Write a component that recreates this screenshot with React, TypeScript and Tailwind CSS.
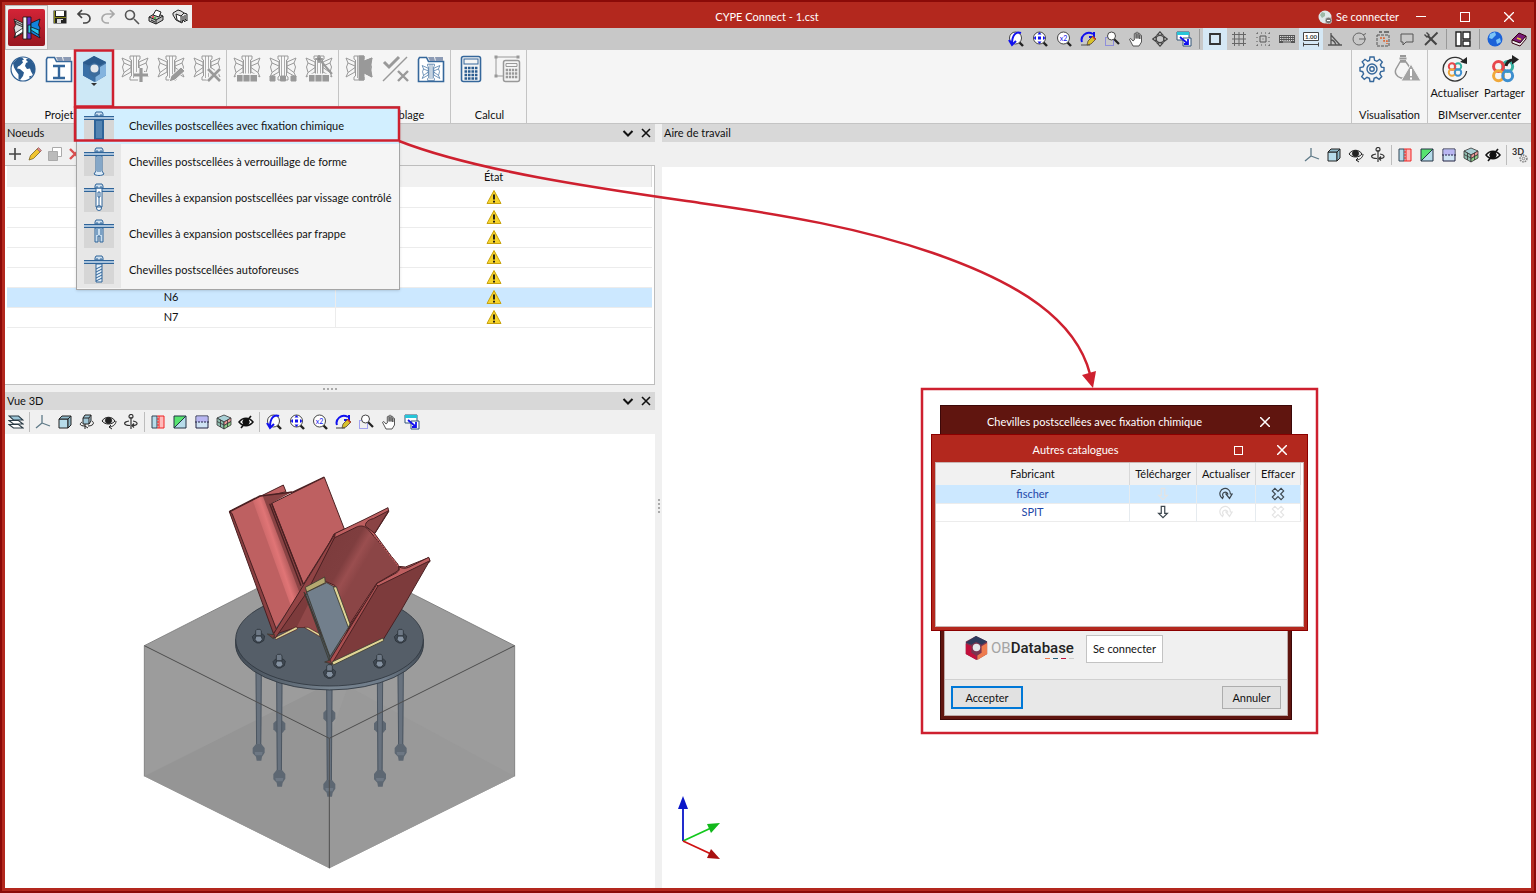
import { useState } from "react";
import type { ReactNode } from "react";

const node = (
  <g>
    <path d="M1 3l9 4v10l-9 5 2-4.500-1.500-5.500L3 8zM27 3l-9 4v10l9 5-2-4.500 1.500-5.500L25 8z" />
    <path d="M3 8l7 3M25 8l-7 3M3 17.500l7-5M25 17.500l-7-5" />
    <path d="M9 1h10v3l-1.500 1v16l1.500 1v3H9v-3l1.500-1V5L9 4z" fill="#f8f8f8" />
    <path d="M12.500 1v22M15.500 1v22" strokeWidth="0.800" />
  </g>
);

const blocks = (
  <g fill="#999" stroke="none">
    <path d="M3 18.500h22V27H3z" fill="#f5f5f5" />
    <path d="M4 20h5.600v6.500H4zM10.400 20h6.200v6.500h-6.200zM17.400 20H24v6.500h-6.600z" />
  </g>
);

const knot = (
  <g fill="none" strokeWidth="2.600">
    <circle cx="10" cy="10" r="4.300" stroke="#e8474c" />
    <circle cx="18" cy="10" r="4.300" stroke="#35b0a0" />
    <circle cx="10" cy="18" r="4.300" stroke="#f0a83a" />
    <circle cx="18" cy="18" r="4.300" stroke="#3e8fcf" />
    <path d="M12.500 6.500a4.300 4.300 0 0 1 1.800 4l-1 3" stroke="#e8474c" />
  </g>
);

const hexCube = (top: string, left: string, right: string, core: string) => (
  <g>
    <path d="M14 1l12 6v13.500L15 27 3 20.500V7z" fill={core} />
    <path d="M14 1l12 6-6 3.500L14 7.500l-5 3-6-2.500z" fill={top} />
    <path d="M3 9.500l6 2.500v7l5.500 3.500V27L3 20.500z" fill={left} />
    <path d="M26 8.500v12L15.500 27v-5l4.500-3v-7z" fill={right} />
    <circle cx="14.500" cy="13.500" r="4" fill="#e3e7ec" />
  </g>
);

// ribbon icons, drawn on a 28 x 28 grid
const bigIcons: Record<string, ReactNode> = {
  globe: (
    <g>
      <circle cx="14" cy="14" r="12" fill="#fff" stroke="#2f5f92" strokeWidth="1.200" />
      <path d="M4 8l5-5 4-.5 2 2-2 1 1 2-3 3-2 1-1 2 3 .5 4 3.500-1 3.500-3 4-1.500-1v-4.500L7 16l-2-3.500z" fill="#2b5c90" />
      <path d="M18 3.500l4 1.500 4 6v5l-2 4-2-3.500-1-3-3 .5-2-3 1-3 2-1-2-2z" fill="#2b5c90" />
      <path d="M20 21.500l3-1-2 3z" fill="#2b5c90" />
    </g>
  ),
  project: (
    <g fill="none" stroke="#35679b">
      <path d="M1.500 26.500V4.500l1-2h7l2 4h15v20z" fill="#fff" strokeWidth="1.600" />
      <path d="M11 2h6l1 4h-5zM18 2h8v4h-7z" fill="#8c9bb5" stroke="none" />
      <path d="M8 11h12M14 11v12M8 23h12" strokeWidth="2.400" />
    </g>
  ),
  cube: hexCube("#2a5a8c", "#3a70a6", "#83b3de", "#3c6c9d"),
  add: (
    <g fill="none" stroke="#999">
      {node}
      <path d="M20 13v14M13 20h14" stroke="#f5f5f5" strokeWidth="6" />
      <path d="M20 13v14M13 20h14" strokeWidth="3.200" />
    </g>
  ),
  edit: (
    <g fill="none" stroke="#999">
      {node}
      <path d="M12 27l2-6 10-9 4 4-10 9z" fill="#999" stroke="#f5f5f5" />
    </g>
  ),
  remove: (
    <g fill="none" stroke="#999">
      {node}
      <path d="M15 14l12 12M27 14L15 26" stroke="#f5f5f5" strokeWidth="5" />
      <path d="M15 14l12 12M27 14L15 26" strokeWidth="2.600" />
    </g>
  ),
  plates: (
    <g fill="none" stroke="#999">
      {node}
      {blocks}
    </g>
  ),
  supports: (
    <g fill="none" stroke="#999">
      {node}
      <path d="M1 21h5v5H1zM11.500 21h5v5h-5zM22 21h5v5h-5z" fill="#999" />
    </g>
  ),
  wizard: (
    <g fill="none" stroke="#999">
      {node}
      {blocks}
      <path d="M15 5l12 14" strokeWidth="2" />
      <path d="M14 0l1 3 3 1-3 1-1 3-1-3-3-1 3-1z" fill="#888" />
    </g>
  ),
  shade: (
    <g fill="none" stroke="#999">
      {node}
      <path d="M14 1h5v5l8-3-1.500 9.500L27 22l-8-4v7h-5z" fill="#999" />
    </g>
  ),
  check: (
    <g fill="none" stroke="#999">
      <path d="M3 7l5 5L18 2" strokeWidth="3" />
      <path d="M2 26L26 2" strokeWidth="1.400" />
      <path d="M17 16l10 10M27 16L17 26" strokeWidth="2.400" />
    </g>
  ),
  folder: (
    <g fill="none" stroke="#35679b">
      <path d="M1.500 26.500V4.500l1-2h7l2 4h15v20z" fill="#fff" strokeWidth="1.600" />
      <path d="M11 2h6l1 4h-5zM18 2h8v4h-7z" fill="#8c9bb5" stroke="none" />
      <g transform="translate(4.500 8.500) scale(0.680)">{node}</g>
    </g>
  ),
  calc: (
    <g fill="none" stroke="#35679b">
      <rect x="4.500" y="1.500" width="19" height="25" rx="2" strokeWidth="1.600" />
      <rect x="7" y="4" width="14" height="5" />
      <path d="M7.500 13h13M7.500 16.500h13M7.500 20h13M7.500 23.500h13" strokeWidth="2.600" strokeDasharray="2.600 0.860" stroke="#2b5c90" />
    </g>
  ),
  calcFrame: (
    <g fill="none" stroke="#999">
      <path d="M3 2v19M3 2h22M3 21h7" />
      <path d="M1.500 0.500h3v3h-3zM1.500 19.500h3v3h-3zM23.500 0.500h3v3h-3z" fill="#999" stroke="none" />
      <rect x="10.500" y="5.500" width="16" height="21" rx="2" fill="#f5f5f5" strokeWidth="1.500" />
      <path d="M13 8.500h11v3H13z" />
      <path d="M12.700 15h11.600M12.700 18.500h11.600M12.700 22h11.600" strokeWidth="2.400" strokeDasharray="2.300 0.800" />
    </g>
  ),
  gear: (
    <g fill="none" stroke="#35679b" strokeWidth="1.400">
      <path d="M12 2h4l.6 3.300 2.300 1 2.800-2 2.600 2.700-1.900 2.800 1 2.300L26 12.500v3.500l-3.200.6-1 2.400 1.900 2.700-2.600 2.600-2.800-1.900-2.200.9-.6 3.200h-3.500l-.6-3.200-2.400-1-2.700 2-2.600-2.600 1.900-2.800-.9-2.200L2 16v-3.500l3.200-.6 1-2.300-2-2.800L7 4.300l2.700 1.900 1.800-.8z" />
      <circle cx="14" cy="14" r="5" />
      <circle cx="14" cy="14" r="2.200" />
    </g>
  ),
  bulb: (
    <g fill="none" stroke="#999">
      <path d="M6 1h6M5.500 3.500h7M6 6h6" strokeWidth="2" />
      <path d="M6 7l-4 7c-2 4 1 8 5 9h4l6-9-5-7z" strokeWidth="1.500" />
      <path d="M17 9l10 17H7z" fill="#a3a3a3" stroke="#f5f5f5" />
      <path d="M17 14v7M17 22.500v2" stroke="#fff" strokeWidth="2" />
    </g>
  ),
  refresh: (
    <g fill="none">
      <g transform="translate(3.500 4) scale(0.750)">{knot}</g>
      <path d="M24 8a11.800 11.800 0 1 0 1.600 8" stroke="#333" strokeWidth="1.300" />
      <path d="M19 7l7 2V2z" fill="#222" />
    </g>
  ),
  share: (
    <g fill="none">
      <g transform="translate(-4 0) scale(1.150)">{knot}</g>
      <path d="M15 11c1-4 3-6 7-6" stroke="#222" strokeWidth="3" />
      <path d="M21 0l7 4.500-7 5z" fill="#222" />
    </g>
  ),
};

const lens = (
  <g>
    <path d="M11 11l4 4" stroke="#222" strokeWidth="2.400" />
    <circle cx="7.500" cy="7" r="6" fill="#fff" stroke="#444" />
  </g>
);

// toolbar icons, drawn on a 16 x 16 grid
const smallIcons: Record<string, ReactNode> = {
  save: (
    <g>
      <path d="M1.500 1.500h13v13h-13z" fill="#222" />
      <path d="M4 2h8v5H4z" fill="#fff" />
      <path d="M2 8h12v1H2z" fill="#8a8a1a" />
      <path d="M2 2h1v12H2z" fill="#8a8a1a" />
      <path d="M5 10h6v4H5z" fill="#ddd" />
      <path d="M9 11h2v3H9z" fill="#222" />
    </g>
  ),
  undo: <path d="M6 1L2 5l4 4M2 5h7a5 4.500 0 0 1 0 9H7" stroke="#444" strokeWidth="1.700" />,
  redo: <path d="M10 1l4 4-4 4M14 5H7a5 4.500 0 0 0 0 9h2" stroke="#a8a8a8" strokeWidth="1.700" />,
  search: <path d="M10 10l5 5M6 1.500a4.500 4.500 0 1 1 0 9 4.500 4.500 0 0 1 0-9z" stroke="#555" strokeWidth="1.600" />,
  print: (
    <g stroke="#222">
      <path d="M1 8l7-4 7 3v4l-7 4-7-3z" fill="#bbb" />
      <path d="M5 6l3-5 5 2-2 5z" fill="#fff" />
      <path d="M1 8l7 3 7-4M8 11v4M3 11l4 2" />
      <path d="M4 8h2" stroke="#e33" strokeWidth="1.500" />
      <path d="M6 9h2" stroke="#3b3" strokeWidth="1.500" />
    </g>
  ),
  plot: (
    <g stroke="#222">
      <path d="M1 4l5-3 3 1 3 2 3 1v7l-2-2v3l-2-2-1 3-6-3-3-5z" fill="#ddd" />
      <path d="M4 5l5 2v6l-4-2z" fill="#fff" />
      <path d="M9 7l3-3M11 7v5M13 6v4" />
    </g>
  ),
  zoomPrev: (
    <g>
      {lens}
      <path d="M13 2C8 0 4 4 4 13M1 9l3 5 4-4" stroke="#11e" strokeWidth="2" />
    </g>
  ),
  zoomAll: (
    <g>
      {lens}
      <path d="M7.500 1l2 2.500h-4zM7.500 13l2-2.500h-4zM1.500 7L4 5v4zM13.500 7L11 5v4zM6 5.500h3v3H6z" fill="#11e" />
    </g>
  ),
  zoomTwo: (
    <g>
      {lens}
      <text x="7.500" y="9.500" textAnchor="middle" fontSize="7" fill="#11e">
        x2
      </text>
    </g>
  ),
  redraw: (
    <g>
      <path d="M13 3C6-1 0 6 2 11M14 1v5H9" stroke="#11e" strokeWidth="2" />
      <path d="M1 14h9" stroke="#777" strokeWidth="1.500" />
      <path d="M7 14l1-4 5-5 3 3-5 5z" fill="#d9c22a" stroke="#543" strokeWidth="0.800" />
      <path d="M13 5l3 3-1 1-3-3z" fill="#c33" />
    </g>
  ),
  zoomWindow: (
    <g>
      <path d="M1.500 6.500h8v8h-8z" stroke="#55e" strokeDasharray="1 1" />
      <path d="M10 8l5 5" stroke="#222" strokeWidth="2.200" />
      <circle cx="7.500" cy="5" r="4" fill="#fff" stroke="#444" />
    </g>
  ),
  hand: (
    <path
      d="M5 10L2.800 7.500l-1.300.8L5 15h6l2.500-4V4.500c-.3-.8-1.500-.8-1.700 0V8 2.800c-.3-.8-1.500-.8-1.800 0V7.500 1.800c-.3-.9-1.600-.9-1.900 0V7.500 2.800c-.3-.8-1.500-.8-1.800 0V9z"
      fill="#fff"
      stroke="#444"
      strokeWidth="0.900"
    />
  ),
  orbit: (
    <g stroke="#444" strokeWidth="1.200">
      <path d="M8 4.500a4 3.500 0 1 1 0 7 4 3.500 0 0 1 0-7z" />
      <path d="M8 .8L10.800 4H5.200zM8 15.200L5.200 12h5.600zM.8 8L4 5.500v5zM15.200 8L12 5.500v5z" fill="#ddd" />
    </g>
  ),
  fullView: (
    <g>
      <path d="M1 1h12v8H1z" fill="#fff" stroke="#357" />
      <path d="M1 1h12v3H1z" fill="#27c5d8" />
      <path d="M7 7h8v8H7z" fill="#fff" stroke="#357" />
      <path d="M4 6l7 6M12 8v5H8" stroke="#11e" strokeWidth="1.800" />
    </g>
  ),
  square: <path d="M3 3h10v10H3z" stroke="#333" strokeWidth="1.800" />,
  grid: <path d="M3.500 1v14M8 1v14M12.500 1v14M1 3.500h14M1 8h14M1 12.500h14" stroke="#666" />,
  snap: (
    <g stroke="#555">
      <path d="M5 5h6v6H5z" />
      <path d="M7.500 8h1" />
      <path d="M2 2h13M2 14h13M2 2v13M14 2v13" strokeDasharray="1 3" />
    </g>
  ),
  keyboard: (
    <g>
      <path d="M0 4h16v8H0z" fill="#555" />
      <path d="M1 5.500h14M1 7.500h14M1 9.500h14" stroke="#ddd" strokeDasharray="1.300 0.900" />
      <path d="M4 11h8" stroke="#ddd" strokeWidth="0.800" />
    </g>
  ),
  dims: (
    <g>
      <path d="M.5 1.500h15v8H.5z" fill="#fff" stroke="#444" />
      <path d="M.5 13.500h15M.5 11.500v4M15.500 11.500v4" stroke="#444" />
      <text x="8" y="8" textAnchor="middle" fontSize="6" fontWeight="bold" fill="#333">
        1.00
      </text>
    </g>
  ),
  angle: <path d="M4 2v12h11M4 4l9 10M4 9c3 0 4 2 5 5M1 14h3" stroke="#555" strokeWidth="1.300" />,
  circle: <path d="M8 2a6 6 0 1 1 0 12A6 6 0 0 1 8 2zM8 8h7M12 4l3-1.500" stroke="#666" />,
  select: (
    <g>
      <path d="M2 4h12v11H2z" stroke="#555" strokeDasharray="3 1" />
      <path d="M4 1h3M9 1h5" stroke="#555" strokeWidth="1.500" />
      <path d="M5 7h4v3h3v3" stroke="#d63" strokeWidth="1.500" strokeDasharray="2 1" />
    </g>
  ),
  note: <path d="M2 3h12v8H7l-3 3v-3H2z" stroke="#555" />,
  tools: (
    <g stroke="#444">
      <path d="M5 5l8.500 8.500" strokeWidth="2.200" />
      <path d="M1.500 3.500L4 6l2-2-2.500-2.500" strokeWidth="1.400" />
      <path d="M14.500 1.500L2 14" strokeWidth="1.800" />
    </g>
  ),
  layout: <path d="M1 1h5v14H1zM8 1h7v7H8zM8 10h7v5H8z" fill="#fff" stroke="#222" strokeWidth="1.400" />,
  earth: (
    <g>
      <circle cx="8" cy="8" r="7.500" fill="#1b62d8" />
      <path d="M3 3l5-2 1 3-4 4-3-1zM9 9l4-2 1 4-4 2z" fill="#7cc4f8" />
    </g>
  ),
  book: (
    <g>
      <path d="M1 9l7-7 7 3-6 8z" fill="#7a1a78" stroke="#301" />
      <path d="M1 9v3l8 3 6-7V5l-6 7z" fill="#eee" stroke="#301" />
      <path d="M6 7l4 1.500" stroke="#e6c23a" strokeWidth="1.600" />
    </g>
  ),
  plus: <path d="M8 2v12M2 8h12" stroke="#444" strokeWidth="1.600" />,
  pencil: (
    <g>
      <path d="M2 14l1.500-4.500 7-7 3 3-7 7z" fill="#f0c430" stroke="#776325" strokeWidth="0.800" />
      <path d="M10 3l3 3 1.500-1.500-3-3z" fill="#d88" stroke="#855" strokeWidth="0.600" />
    </g>
  ),
  copy: (
    <g stroke="#aaa">
      <path d="M5.500 1.500h9v9h-9z" fill="#fff" />
      <path d="M1.500 5.500h9v9h-9z" fill="#bbb" />
    </g>
  ),
  cross: <path d="M3 3l10 10M13 3L3 13" stroke="#d94f4f" strokeWidth="2.400" />,
  layers: (
    <g stroke="#2b3b45" strokeWidth="1.100">
      <path d="M1 10.500h9.500L15 14H5.500z" fill="#fff" />
      <path d="M1 6.500h9.500L15 10H5.500z" fill="#fff" />
      <path d="M1 2h9.500L15 6H5.500z" fill="#9cc6d8" />
    </g>
  ),
  axes: <path d="M7 1v8M7 9l8 3M7 9l-6 5" stroke="#5f7a88" strokeWidth="1.300" />,
  box: (
    <g stroke="#222">
      <path d="M2 5h9v9H2z" fill="#b7dcea" />
      <path d="M2 5l3-3h9l-3 3zM11 5l3-3v9l-3 3z" fill="#8fb9c9" />
    </g>
  ),
  boxOrbit: (
    <g stroke="#222">
      <path d="M4 4h6v6H4zM4 4l2-3h6l-2 3M12 1v6l-2 3" fill="#9fc6d6" />
      <path d="M3 8c-3 2-2 4 3 4M13 7c3 2 1 5-4 5M6 10v5M6 12l3 2" />
    </g>
  ),
  eyeOrbit: (
    <g stroke="#222">
      <path d="M1 7c3-5 10-5 13 0-3 4-10 4-13 0z" fill="#ddd" />
      <circle cx="7.500" cy="6.500" r="3" fill="#222" />
      <path d="M15 7c0 4-4 6-7 6M10 11l-2 2 3 2" />
    </g>
  ),
  axisOrbit: (
    <g stroke="#333" strokeWidth="1.200">
      <path d="M8 3v12M6 2.500a2 2 0 1 1 4 0 2 2 0 0 1-4 0z" />
      <path d="M6 7C-.5 8 .5 11.500 7 11.500M10 7c6 1 5 4.500-.500 4.500M11 9.500l-2 2 2 2" />
    </g>
  ),
  splitView: (
    <g>
      <path d="M2 2h5v12H2z" fill="#b7dcea" stroke="#345" />
      <path d="M9 2h5v12H9z" fill="#fbb" stroke="#e22" />
      <path d="M8 1v14" stroke="#e22" strokeDasharray="2 1" />
    </g>
  ),
  diagonal: (
    <g>
      <path d="M2 2h12L2 14z" fill="#57e36f" />
      <path d="M14 2v12H2z" fill="#b7dcea" />
      <path d="M2 2h12v12H2zM2 14L14 2" stroke="#234" />
    </g>
  ),
  section: (
    <g>
      <path d="M2 2h12v12H2z" fill="#cfe3f4" stroke="#224" />
      <path d="M2.500 2.500h11V8h-11z" fill="#b9b6f2" />
      <path d="M1 8h14" stroke="#224" strokeDasharray="2 1" />
    </g>
  ),
  stack: (
    <g stroke="#333" strokeWidth="0.800">
      <path d="M8 1l7 3-7 4-7-4z" fill="#a9d0d6" />
      <path d="M1 4l7 4v7l-7-4z" fill="#8fbdb0" />
      <path d="M15 4L8 8v3.500l7-4z" fill="#e99" />
      <path d="M15 7.500l-7 4V15l7-4z" fill="#8fd08a" />
      <path d="M1 7.500L8 11M4.500 6v7M11.500 6v7" />
    </g>
  ),
  hidden: (
    <g stroke="#111">
      <path d="M1 8c4-5 10-5 14 0-4 5-10 5-14 0z" fill="#fff" strokeWidth="1.500" />
      <circle cx="8" cy="8" r="3.200" fill="#111" />
      <path d="M3 14L13 2" strokeWidth="1.600" />
    </g>
  ),
  threeD: (
    <g>
      <text x="0" y="8" fontSize="9" fontWeight="bold" fill="#333">
        3D
      </text>
      <circle cx="11.500" cy="11.500" r="3.400" stroke="#888" strokeWidth="1.600" strokeDasharray="1.600 0.900" />
      <circle cx="11.500" cy="11.500" r="1.300" stroke="#888" />
    </g>
  ),
  download: <path d="M6 1.500h4v8h3L8 14.500 3 9.500h3z" stroke="currentColor" strokeWidth="1.400" />,
  update: <path d="M2 11a6 6 0 1 1 11-3h2l-3 5-4-5h2a3 3 0 1 0-5 3l-1 2z" stroke="currentColor" strokeWidth="1.400" />,
  erase: <path d="M4.500 1.500L8 5l3.500-3.500 3 3L11 8l3.500 3.500-3 3L8 11l-3.500 3.500-3-3L5 8 1.500 4.500z" stroke="currentColor" strokeWidth="1.300" />,
};

const SmallIcon = ({ name, className = "size-4" }: { name: string; className?: string }) => (
  <svg viewBox="0 0 16 16" fill="none" className={className} aria-hidden="true">
    {smallIcons[name]}
  </svg>
);

const ToolButton = ({ name, width = "w-[22px]", active = false }: { name: string; width?: string; active?: boolean }) => (
  <button
    aria-label={name}
    className={`flex h-[22px] shrink-0 items-center justify-center hover:bg-sky-100 ${width} ${active ? "bg-[#d5e8f5]" : ""}`}
  >
    <SmallIcon name={name} />
  </button>
);

const Separator = () => <span className="mx-[2px] h-5 w-px shrink-0 bg-[#bdbdbd]" />;

const RibbonButton = ({ name }: { name: string }) => (
  <button aria-label={name} className="flex h-[38px] w-9 shrink-0 items-center justify-center hover:bg-sky-100">
    <svg viewBox="0 0 28 28" fill="none" className="size-7">
      {bigIcons[name]}
    </svg>
  </button>
);

const RibbonGroup = ({ icons, label }: { icons: string[]; label?: string }) => (
  <div className="mr-[2px] flex flex-col justify-between border-r border-[#c4c4c4]">
    <div className="flex pr-px">
      {icons.map((icon) => (
        <RibbonButton key={icon} name={icon} />
      ))}
    </div>
    <span className="text-center">{label}</span>
  </div>
);

const anchors = [
  {
    label: "Chevilles postscellées avec fixation chimique",
    shape: <path d="M11 9h8v19h-8z" fill="#5484b2" strokeWidth="2" />,
  },
  {
    label: "Chevilles postscellées à verrouillage de forme",
    shape: <path d="M12 9h6v15l2 3c-2 2-8 2-10 0l2-3zM14 10v15M16 10v15" fill="#dceaf6" />,
  },
  {
    label: "Chevilles à expansion postscellées par vissage contrôlé",
    shape: <path d="M12 5h6v19h-6zM14 9h2v5h-2zM15 14v8M12.500 25a2.500 2.500 0 1 0 5 0 2.500 2.500 0 0 0-5 0z" fill="#fff" />,
  },
  {
    label: "Chevilles à expansion postscellées par frappe",
    shape: <path d="M11 9h8v14h-3v-6h-2v6h-3zM13 10v6M17 10v6" fill="#c9ddee" />,
  },
  {
    label: "Chevilles postscellées autoforeuses",
    shape: <path d="M12 9h6v18h-6zM12 14l6-3M12 17l6-3M12 20l6-3M12 23l6-3M12 26l6-3" fill="#e6f0f8" />,
  },
];

const AnchorMenu = () => (
  <ul
    role="menu"
    className="absolute top-full left-0 z-20 w-max min-w-[323px] border border-[#a5a5a5] bg-[#f5f5f5] py-px shadow-sm"
  >
    {anchors.map((anchor, i) => (
      <li key={anchor.label} role="none">
        <button
          role="menuitem"
          className={`flex h-9 w-full items-center text-left hover:bg-[#d2efff] ${i === 0 ? "bg-[#d2efff]" : ""}`}
        >
          <span className={`flex h-full w-11 items-center justify-center ${i === 0 ? "" : "bg-[#e7e7e7]"}`}>
            <svg viewBox="0 0 30 30" fill="none" stroke="#2f6499" className="size-[30px]">
              <path d="M0 6h30v23H0z" fill="#d6d6d6" stroke="none" />
              <path d="M0 6h30v3H0z" fill="#a9c3dc" stroke="none" />
              <path d="M0 5.500h30M0 8.500h30" />
              {anchor.shape}
              <path d="M12 1h6l1 2v2h-8V3zM13 3v2M17 3v2" fill="#cfe0ef" />
            </svg>
          </span>
          <span className="pr-[7px] pl-2">{anchor.label}</span>
        </button>
      </li>
    ))}
  </ul>
);

const PanelTitle = ({ title, controls = false }: { title: string; controls?: boolean }) => (
  <div className="flex h-[18px] shrink-0 items-center justify-between bg-[#d8d8d8] pr-[2px] pl-[2px]">
    <h2>{title}</h2>
    {controls && (
      <span className="flex gap-1">
        <button aria-label="Réduire" className="flex size-[14px] items-center justify-center">
          <svg viewBox="0 0 12 12" fill="none" stroke="#111" strokeWidth="2" className="size-3">
            <path d="M1.500 4L6 8.500 10.500 4" />
          </svg>
        </button>
        <button aria-label="Fermer" className="flex size-[14px] items-center justify-center">
          <svg viewBox="0 0 12 12" fill="none" stroke="#111" strokeWidth="1.600" className="size-3">
            <path d="M2 2l8 8M10 2l-8 8" />
          </svg>
        </button>
      </span>
    )}
  </div>
);

const Warning = () => (
  <svg viewBox="0 0 16 16" className="mx-auto size-4" role="img" aria-label="Avertissement">
    <path d="M8 1.500L15 14.500H1z" fill="#f6d42c" stroke="#c9a20c" strokeLinejoin="round" />
    <path d="M8 5.500v5M8 11.800v1.600" stroke="#111" strokeWidth="1.800" />
  </svg>
);

const nodes = [
  { id: 1 },
  { id: 2 },
  { id: 3 },
  { id: 4 },
  { id: 5 },
  { id: 6, name: "N6" },
  { id: 7, name: "N7" },
];

const NodesTable = () => {
  const [selected, setSelected] = useState(6);

  return (
    <div className="h-[220px] shrink-0 border-t border-r border-b border-[#bdbdbd] bg-white px-[2px]">
      <table className="w-full table-fixed border-collapse text-center">
        <thead>
          <tr className="h-[21px] bg-[#f1f1f1]">
            <th className="w-[51%] border-r border-[#dcdcdc] p-0" />
            <th className="border-r border-[#dcdcdc] p-0 font-normal">État</th>
          </tr>
        </thead>
        <tbody>
          {nodes.map(({ id, name }) => (
            <tr
              key={id}
              onClick={() => setSelected(id)}
              className={`h-5 border-b border-[#ececec] ${selected === id ? "bg-[#cce8ff]" : ""}`}
            >
              <td className="border-r border-[#ececec] p-0">{name}</td>
              <td className="p-0">
                <Warning />
              </td>
            </tr>
          ))}
        </tbody>
      </table>
    </div>
  );
};

const Bolt = ({ x, y }: { x: number; y: number }) => (
  <g transform={`translate(${x} ${y})`} stroke="#2b323a" strokeWidth="2.500">
    <path d="M-18 2l8-8h22l7 6-3 14-12 7H-4l-10-6z" fill="#3f4852" />
    <path d="M-7 0h15l4 10-6 8H-4l-6-8z" fill="#8491a0" />
    <path d="M-8-16l4-4h9l4 4v15H-8z" fill="#6d7885" />
  </g>
);

const Rod = ({ x, top, bottom, nut }: { x: number; top: number; bottom: number; nut?: number }) => (
  <g>
    {nut && <path d={`M${x - 18} ${nut - 10}l8-8h20l8 8v18l-8 10h-18l-10-10z`} fill="#5d6772" />}
    <path d={`M${x - 9} ${top}h18l-2 ${bottom - top}h-14z`} fill="#68727e" />
    <path d={`M${x - 8} ${top}l2 ${bottom - top}M${x + 8} ${top}l-2 ${bottom - top}`} stroke="#4c5661" strokeWidth="3" />
    <path d={`M${x - 18} ${bottom - 20}l10-12h16l10 12v14l-8 12-2 12h-14l-2-12-10-10z`} fill="#5d6772" />
    <path d={`M${x - 12} ${bottom - 8}h24l-2 10h-20z`} fill="#6d7783" />
  </g>
);

const Model = () => (
  <svg viewBox="0 0 1200 1260" className="h-[420px] w-[400px]" role="img" aria-label="Vue 3D de l'ancrage">
    <defs>
      <linearGradient id="fold" gradientUnits="userSpaceOnUse" x1="395" y1="260" x2="470" y2="235">
        <stop offset="0" stopColor="#be6061" />
        <stop offset="0.500" stopColor="#e07576" />
        <stop offset="1" stopColor="#8f4546" />
      </linearGradient>
      <linearGradient id="groove" gradientUnits="userSpaceOnUse" x1="600" y1="250" x2="720" y2="320">
        <stop offset="0" stopColor="#7d3c3d" />
        <stop offset="0.450" stopColor="#7f3e3f" />
        <stop offset="0.650" stopColor="#9a4e4f" />
        <stop offset="0.850" stopColor="#8b4546" />
      </linearGradient>
      <linearGradient id="rim" x1="0" x2="1">
        <stop offset="0" stopColor="#434c56" />
        <stop offset="0.500" stopColor="#76838f" />
        <stop offset="0.800" stopColor="#6f7c8a" />
        <stop offset="1" stopColor="#434c56" />
      </linearGradient>
    </defs>

    <path d="M43 557L598 275l556 282v392L598 1225 43 949z" fill="#9c9c9c" />
    <path d="M43 949L598 670v555z" fill="#959595" />
    <path d="M598 835v390l556-276-500-270z" fill="#999" />
    <path d="M43 949V557L598 275l556 282v392" fill="none" stroke="#777" strokeWidth="2.500" />

    <Rod x={386} top={630} bottom={884} />
    <Rod x={812} top={630} bottom={884} />
    <Rod x={448} top={650} bottom={962} nut={800} />
    <Rod x={750} top={650} bottom={962} nut={800} />
    <Rod x={598} top={670} bottom={992} nut={768} />
    <path d="M43 557l555 278 556-278M598 835v390" fill="none" stroke="#4d4d4d" strokeWidth="3" />

    <path d="M317 538v22a282 138 0 0 0 563 0v-22z" fill="url(#rim)" stroke="#2f363e" strokeWidth="2.500" />
    <ellipse cx="598.500" cy="538" rx="281.500" ry="140" fill="#555e68" stroke="#2f363e" strokeWidth="2.500" />
    <Bolt x={385} y={528} />
    <Bolt x={811} y={528} />
    <Bolt x={447} y={603} />
    <Bolt x={748} y={603} />

    <g stroke="#4a2022" strokeWidth="3" strokeLinejoin="round">
      <path d="M298 155L460 75l8 20-78 20z" fill="#be6061" />
      <path d="M390 108l100-14-65 36 95 240-10 50-30 20z" fill="#8a4344" stroke="none" />
      <path d="M298 155l74-36 118 310-55 78z" fill="#be6061" stroke="none" />
      <path d="M368 121l30-14 114 300-28 35z" fill="url(#fold)" stroke="none" />
      <path d="M298 155l92-47 100-12 93-44" fill="none" strokeWidth="5" />
      <path d="M425 130L583 52l60 155-28 14-95 152z" fill="#be6061" />
      <path d="M425 130l95 243M419 131l94 246" fill="none" strokeWidth="4" />
      <path d="M298 155l132 365 10-10L306 160z" fill="#8a4042" />
      <path d="M432 524l90-130 52 132-50-24h-24z" fill="#7d3b3c" />
      <path d="M500 502l35-70 20 52 16 42-47-24z" fill="#914849" stroke="none" />
      <path d="M433 534l66-34 4 7-64 31zM522 502h12l36 20v8z" fill="#e0d596" strokeWidth="2" />

      <path d="M612 222l90-43 72-36 2 12-42 66 72 98 20 2 70-28 4 12-158 78-82 200-132-198z" fill="#be5f60" />
      <path d="M776 152l-42 68-28-22c0-14 14-20 24-22z" fill="#8a4344" />
      <path d="M612 234l70-34c12-4 24-2 32 8l86 100c10 12 8 22-2 28l-58 34-82 124-44-118-28-12-60 28z" fill="url(#groove)" />
      <path d="M733 226l72 92" fill="none" stroke="#be5f60" strokeWidth="4" strokeDasharray="5 3" />
      <path d="M615 222L428 526l8 8 94-136 84-166z" fill="#924445" />
      <path d="M742 376l158-76-85 148-55 90-155 74 55-116z" fill="#7d3b3c" />
      <path d="M742 370L596 606l8 8 140-236z" fill="#a94f50" />
      <path d="M738 372l62-34c8-6 10-10 6-18 10 6 20 6 30 2l60-30 4 10-156 76z" fill="#be5f60" />
    </g>

    <g stroke="#3a3a30" strokeWidth="2.500" strokeLinejoin="round">
      <path d="M530 396l60-28 25 14 43 116-58 92z" fill="#727f8c" />
      <path d="M522 396l76 192v16z" fill="#4a5560" />
      <path d="M526 382l58-31 2 17-56 28z" fill="#b5a970" />
      <path d="M610 382l9-2 41 112-5 10z" fill="#e0d596" />
      <path d="M606 606l153-72 2 8-151 73z" fill="#e0d596" />
      <path d="M412 522l22 2-4 12zM584 606l16-6 6 12z" fill="#7d3b3c" />
    </g>
    <Bolt x={598} y={634} />
  </svg>
);

const Triad = () => (
  <svg viewBox="0 0 48 70" className="h-[70px] w-12" role="img" aria-label="Axes">
    <path d="M6 47V12" stroke="#0a16c8" strokeWidth="1.800" />
    <path d="M6 2l5 13H1z" fill="#0a16c8" />
    <path d="M6 47l28-13" stroke="#12c81c" strokeWidth="1.800" />
    <path d="M43 29l-9 10-4-9z" fill="#12b81c" />
    <path d="M6 47l28 13" stroke="#d01212" strokeWidth="1.800" />
    <path d="M43 65l-13-1 4-9z" fill="#a81010" />
  </svg>
);

const CatalogDialog = () => {
  const rows = [
    { maker: "fischer", installed: true },
    { maker: "SPIT", installed: false },
  ];

  return (
    <div
      role="dialog"
      aria-label="Autres catalogues"
      className="relative -mr-[17px] -ml-[10px] flex h-[197px] flex-col border border-[#8b0000] bg-[#b3281e] px-[3px] pb-[3px]"
    >
      <div className="flex h-[27px] shrink-0 items-center pt-[3px] text-white">
        <h3 className="flex-1 text-center">Autres catalogues</h3>
        <button aria-label="Agrandir" className="flex w-11 justify-center">
          <span className="size-[9px] border border-white" />
        </button>
        <button aria-label="Fermer" className="flex w-11 justify-center">
          <svg viewBox="0 0 10 10" stroke="#fff" strokeWidth="1.500" className="size-[10px]">
            <path d="M0 0l10 10M10 0L0 10" />
          </svg>
        </button>
      </div>
      <div className="flex-1 border border-[#c9b5b3] bg-white pr-[2px]">
        <table className="w-full table-fixed border-collapse text-center">
          <thead>
            <tr className="h-[22px] bg-[#f1f1f1]">
              <th className="border-r border-[#d8d8d8] p-0 font-normal">Fabricant</th>
              <th className="w-[67px] border-r border-[#d8d8d8] p-0 font-normal">Télécharger</th>
              <th className="w-[59px] border-r border-[#d8d8d8] p-0 font-normal">Actualiser</th>
              <th className="w-[45px] border-r border-[#d8d8d8] p-0 font-normal">Effacer</th>
            </tr>
          </thead>
          <tbody>
            {rows.map(({ maker, installed }) => (
              <tr key={maker} className={`h-[18px] border-b border-[#ececec] ${installed ? "bg-[#cce8ff]" : ""}`}>
                <td className="border-r border-[#e6ebef] p-0 text-[#2347a8]">{maker}</td>
                {[
                  { icon: "download", enabled: !installed },
                  { icon: "update", enabled: installed },
                  { icon: "erase", enabled: installed },
                ].map(({ icon, enabled }) => (
                  <td key={icon} className="border-r border-[#e6ebef] p-0">
                    <button
                      aria-label={`${icon} ${maker}`}
                      disabled={!enabled}
                      className={`flex w-full justify-center ${enabled ? "text-[#3d474f]" : "text-[#e4e4e4]"}`}
                    >
                      <SmallIcon name={icon} className="size-[14px]" />
                    </button>
                  </td>
                ))}
              </tr>
            ))}
          </tbody>
        </table>
      </div>
    </div>
  );
};

const AnchorDialog = () => (
  <div
    role="dialog"
    aria-label="Chevilles postscellées avec fixation chimique"
    className="absolute top-[238px] left-[278px] w-[352px] border border-[#3c0808] bg-[#60150f]"
  >
    <div className="flex h-7 items-center pt-1 text-white">
      <h3 className="flex-1 pl-[5px] text-center">Chevilles postscellées avec fixation chimique</h3>
      <button aria-label="Fermer" className="mr-1 flex w-11 justify-center">
        <svg viewBox="0 0 10 10" stroke="#fff" strokeWidth="1.500" className="size-[10px]">
          <path d="M0 0l10 10M10 0L0 10" />
        </svg>
      </button>
    </div>
    <CatalogDialog />
    <div className="mx-[3px] mb-[3px] border border-t-0 border-[#bda9a7]">
      <div className="flex h-12 items-start gap-3 bg-[#f0f0f0] pt-1 pl-[18px]">
        <div className="flex items-center gap-[2px]">
          <svg viewBox="0 0 28 28" className="size-[26px]">
            {hexCube("#2d3a5c", "#c2103c", "#ee7b4e", "#7a3550")}
          </svg>
          <div className="flex flex-col items-end">
            <span className="font-['Roboto'] text-[15px] leading-[20px] text-[#a4a4a4]">
              OB<span className="font-medium text-[#222]">Database</span>
            </span>
            <span className="flex gap-[3px]">
              <i className="h-px w-[5px] bg-[#ee7b4e]" />
              <i className="h-px w-[5px] bg-[#26617c]" />
              <i className="h-px w-[5px] bg-[#c2103c]" />
              <i className="h-px w-[5px] bg-[#ccc]" />
            </span>
          </div>
        </div>
        <button className="h-7 w-[77px] border border-[#c3c3c3] bg-white">Se connecter</button>
      </div>
      <div className="flex items-center justify-between border-t border-[#d0d0d0] bg-[#e8e8e8] px-[6px] py-[6px]">
        <button className="h-[23px] w-[72px] border-2 border-[#0078d7] bg-[#e1e1e1]">Accepter</button>
        <button className="h-[23px] w-[59px] border border-[#adadad] bg-[#e1e1e1]">Annuler</button>
      </div>
    </div>
  </div>
);

const Annotations = () => (
  <svg className="pointer-events-none absolute inset-0 z-30 h-full w-full" fill="none" aria-hidden="true">
    <g transform="translate(-2 -2)">
      <g stroke="#ce202f" strokeWidth="2.500">
        <rect x="75" y="50.500" width="38" height="56" />
        <rect x="75" y="107.500" width="324" height="33" />
        <rect x="922" y="389" width="395" height="344" />
        <path d="M399 141C478 172 610 190 700 203C785 215 860 228 933 253C1020 283 1076 320 1090 374" />
      </g>
      <path d="M1093 388l-11-13 14-4z" fill="#ce202f" />
    </g>
  </svg>
);

const viewTools = ["zoomPrev", "zoomAll", "zoomTwo", "redraw", "zoomWindow", "hand"];
const drawTools = ["square", "grid", "snap", "keyboard", "dims", "angle", "circle", "select", "note", "tools"];
const cutTools = ["splitView", "diagonal", "section", "stack", "hidden"];

const Header = () => (
  <header className="flex shrink-0 text-white">
    <button aria-label="CYPE Connect" className="flex w-[43px] items-center justify-center border border-[#bbb] bg-[#f0f0f0]">
      <span className="flex size-[37px] items-center justify-center rounded-[2px] bg-gradient-to-b from-[#d42437] to-[#98161f]">
        <svg viewBox="0 0 28 24" className="h-6 w-7" stroke="#111" strokeWidth="0.800">
          <path d="M1 3l9 4v10l-9 5 1.500-4L1 12l1.500-3z" fill="#ddd" />
          <path d="M2.500 17l7.500-5v4l-8 5z" fill="#fff" />
          <path d="M2 5l8 4v2L3 8z" fill="#aaa" />
          <path d="M10 1h4v22h-4z" fill="#f3f3f3" />
          <path d="M14 1h4v22h-4z" fill="#6336c8" />
          <path d="M15 9h3v8h-3z" fill="#29c4ea" />
          <path d="M27 3l-9 4v10l9 5-1.500-4 1.500-6-1.500-3z" fill="#1483dc" />
          <path d="M26 14l-8-3v3l8 5z" fill="#29c4ea" />
        </svg>
      </span>
    </button>
    <div className="flex min-w-0 flex-1 flex-col">
      <div className="flex h-[23px] items-center">
        <div className="flex h-full items-center bg-[#f0f0f0]">
          {["save", "undo", "redo", "search", "print", "plot"].map((icon) => (
            <button key={icon} aria-label={icon} className="flex w-6 justify-center">
              <SmallIcon name={icon} />
            </button>
          ))}
        </div>
        <h1 className="flex-1 pl-6 text-center">CYPE Connect - 1.cst</h1>
        <button className="flex items-center gap-1">
          <svg viewBox="0 0 14 14" className="size-[14px]">
            <circle cx="7" cy="7" r="6.500" fill="#dfe8ea" />
            <path d="M4 2l3 1v3l-3 2-2-3z" fill="#9db9a8" />
            <circle cx="10.500" cy="10.500" r="3.300" fill="#777" stroke="#ddd" strokeWidth="0.600" />
            <path d="M9 10.500h3" stroke="#fff" />
          </svg>
          Se connecter
        </button>
        <div className="flex">
          <button aria-label="Réduire" className="flex h-5 w-11 items-center justify-center">
            <span className="h-px w-[10px] bg-white" />
          </button>
          <button aria-label="Agrandir" className="flex h-5 w-11 items-center justify-center">
            <span className="size-[10px] border border-white" />
          </button>
          <button aria-label="Fermer" className="flex h-5 w-11 items-center justify-center">
            <svg viewBox="0 0 10 10" stroke="#fff" strokeWidth="1.300" className="size-[10px]">
              <path d="M0 0l10 10M10 0L0 10" />
            </svg>
          </button>
        </div>
      </div>
      <div className="flex h-[22px] items-center justify-end bg-[#c8c8c8]">
        {[...viewTools, "orbit", "fullView"].map((icon) => (
          <ToolButton key={icon} name={icon} width="w-6" />
        ))}
        <span className="mx-[3px] h-5 w-px bg-[#999]" />
        {drawTools.map((icon) => (
          <ToolButton key={icon} name={icon} width="w-6" active={icon === "square" || icon === "dims"} />
        ))}
        <span className="mx-[3px] h-5 w-px bg-[#999]" />
        <ToolButton name="layout" width="w-[26px]" />
        <span className="mx-[3px] h-5 w-px bg-[#999]" />
        <ToolButton name="earth" width="w-6" />
        <ToolButton name="book" width="w-6" />
      </div>
    </div>
  </header>
);

const Ribbon = () => (
  <div className="flex h-[74px] shrink-0 border-b border-[#c4c4c4] bg-[#f5f5f5]">
    <div className="relative flex">
      <div className="flex w-28 flex-col justify-between">
        <div className="flex">
          <RibbonButton name="globe" />
          <RibbonButton name="project" />
        </div>
        <span className="pr-1 text-center">Projet</span>
      </div>
      <div className="absolute left-[71px]">
        <button aria-label="Chevilles" className="flex h-14 w-9 flex-col items-center bg-[#cde8f6] pt-[5px]">
          <svg viewBox="0 0 28 28" className="size-7">
            {bigIcons.cube}
          </svg>
          <span className="border-x-3 border-t-3 border-transparent border-t-[#333]" />
        </button>
        <AnchorMenu />
      </div>
    </div>
    <RibbonGroup icons={["add", "edit", "remove"]} />
    <RibbonGroup icons={["plates", "supports", "wizard"]} />
    <RibbonGroup icons={["shade", "check", "folder"]} label="Assemblage" />
    <RibbonGroup icons={["calc", "calcFrame"]} label="Calcul" />
    <div className="ml-auto flex border-l border-[#c4c4c4]">
      <div className="flex w-[76px] flex-col items-center justify-between border-r border-[#c4c4c4]">
        <div className="flex">
          <RibbonButton name="gear" />
          <RibbonButton name="bulb" />
        </div>
        <span>Visualisation</span>
      </div>
      <div className="flex w-[103px] flex-col items-center justify-between">
        <div className="flex">
          {[
            ["refresh", "Actualiser"],
            ["share", "Partager"],
          ].map(([icon, label]) => (
            <button key={icon} className="flex w-[50px] flex-col items-center pt-[5px]">
              <svg viewBox="0 0 28 28" className="size-7">
                {bigIcons[icon]}
              </svg>
              <span className="pt-[2px]">{label}</span>
            </button>
          ))}
        </div>
        <span>BIMserver.center</span>
      </div>
    </div>
  </div>
);

export default function App() {
  return (
    <div className="relative flex h-screen flex-col overflow-hidden border-2 border-[#8b0a08] bg-[#b3281e] p-[3px] font-['Lato','Open_Sans',sans-serif] text-[11px] leading-4 text-[#111]">
      <Header />
      <Ribbon />
      <main className="grid min-h-0 flex-1 grid-cols-[650fr_7px_869fr] bg-[#f0f0f0]">
        <section className="flex min-h-0 min-w-0 flex-col">
          <PanelTitle title="Noeuds" controls />
          <div className="flex h-[23px] shrink-0 items-center">
            {["plus", "pencil", "copy", "cross"].map((icon) => (
              <ToolButton key={icon} name={icon} width="w-5" />
            ))}
          </div>
          <NodesTable />
          <div className="flex h-[7px] shrink-0 items-center justify-center gap-[2px]">
            {[0, 1, 2, 3].map((i) => (
              <i key={i} className="size-[2px] bg-[#aaa]" />
            ))}
          </div>
          <PanelTitle title="Vue 3D" controls />
          <div className="flex h-6 shrink-0 items-center">
            <ToolButton name="layers" />
            <Separator />
            {["axes", "box", "boxOrbit", "eyeOrbit", "axisOrbit"].map((icon) => (
              <ToolButton key={icon} name={icon} />
            ))}
            <Separator />
            {cutTools.map((icon) => (
              <ToolButton key={icon} name={icon} />
            ))}
            <Separator />
            {[...viewTools, "fullView"].map((icon) => (
              <ToolButton key={icon} name={icon} width="w-[23px]" />
            ))}
          </div>
          <div className="flex min-h-0 flex-1 items-center justify-center overflow-hidden bg-white pt-[18px]">
            <Model />
          </div>
        </section>
        <div className="flex flex-col items-center justify-center gap-[2px]">
          {[0, 1, 2, 3].map((i) => (
            <i key={i} className="size-[2px] bg-[#aaa]" />
          ))}
        </div>
        <section className="flex min-h-0 min-w-0 flex-col">
          <PanelTitle title="Aire de travail" />
          <div className="flex h-[25px] shrink-0 items-center justify-end">
            {["axes", "box", "eyeOrbit", "axisOrbit"].map((icon) => (
              <ToolButton key={icon} name={icon} />
            ))}
            <Separator />
            {cutTools.map((icon) => (
              <ToolButton key={icon} name={icon} />
            ))}
            <Separator />
            <ToolButton name="threeD" />
          </div>
          <div className="relative flex min-h-0 flex-1 items-end bg-white pb-6 pl-[15px]">
            <Triad />
            <AnchorDialog />
          </div>
        </section>
      </main>
      <Annotations />
    </div>
  );
}
